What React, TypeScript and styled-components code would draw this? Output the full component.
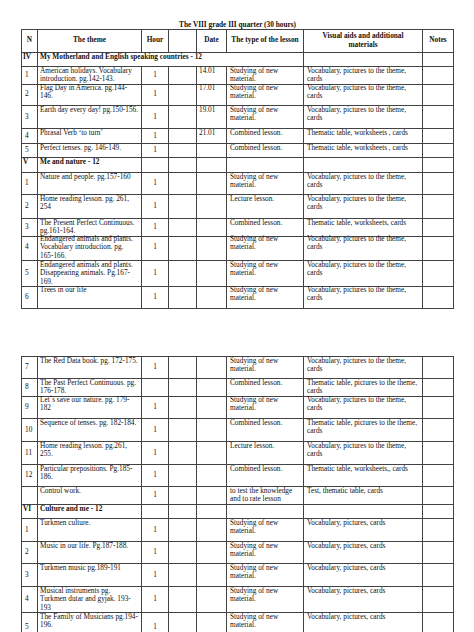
import React from "react";
import styled, { createGlobalStyle } from "styled-components";

const LINE = "#434343";

const GlobalStyle = createGlobalStyle`
  html, body {
    margin: 0;
    padding: 0;
    background: #ffffff;
  }
  body {
    font-family: "Liberation Serif", "Times New Roman", serif;
    color: #111111;
  }
`;

const Page = styled.div`
  width: 474px;
  height: 632px;
  overflow: hidden;
  padding-left: 21px;
  box-sizing: border-box;
`;

const Title = styled.div`
  width: 433px;
  height: 29px;
  display: flex;
  align-items: flex-end;
  justify-content: center;
  font-size: 7.3px;
  line-height: 9px;
  font-weight: bold;
`;

const Sheet = styled.div<{ $gap?: number }>`
  width: 433px;
  box-sizing: border-box;
  border-top: 1px solid ${LINE};
  border-left: 1px solid ${LINE};
  margin-top: ${(p) => p.$gap ?? 0}px;
`;

const Row = styled.div<{ $h: number }>`
  display: grid;
  grid-template-columns: 16px 104px 27px 28px 30px 77px 119px 31px;
  height: ${(p) => p.$h}px;
`;

const Cell = styled.div<{ $span?: number }>`
  box-sizing: border-box;
  border-right: 1px solid ${LINE};
  border-bottom: 1px solid ${LINE};
  grid-column: span ${(p) => p.$span ?? 1};
  font-size: 7.3px;
  line-height: 8.4px;
  white-space: nowrap;
  display: flex;
  flex-direction: column;
  min-width: 0;
`;

const HeadCell = styled(Cell)`
  font-weight: bold;
  align-items: center;
  justify-content: center;
  text-align: center;
  padding-bottom: 1px;
`;

const NumCell = styled(Cell)<{ $bold?: boolean }>`
  justify-content: ${(p) => (p.$bold ? "flex-start" : "center")};
  padding-left: ${(p) => (p.$bold ? 1 : 3)}px;
  font-weight: ${(p) => (p.$bold ? "bold" : "normal")};
`;

const TextCell = styled(Cell)<{ $pad?: number }>`
  justify-content: flex-start;
  padding-left: ${(p) => p.$pad ?? 3}px;
`;

const SectionCell = styled(Cell)`
  justify-content: flex-start;
  padding-left: 2px;
  font-weight: bold;
`;

const HourCell = styled(Cell)`
  align-items: center;
  justify-content: center;
`;

type Item = {
  n: string;
  theme: string[];
  hour?: string;
  date?: string;
  type: string[];
  visual: string[];
  h: number;
};

type Section = { section: string; title: string; h: number; merged?: boolean };

type Line = Item | Section;

const STUDY = ["Studying of new", "material."];
const VOCAB = ["Vocabulary, pictures to the theme,", "cards"];
const COMBINED = ["Combined lesson."];
const VPC = ["Vocabulary, pictures, cards"];

const firstSheet: Line[] = [
  {
    section: "IV",
    title: "My Motherland and English speaking countries  - 12",
    h: 14,
    merged: true,
  },
  {
    n: "1",
    theme: ["American holidays. Vocabulary", "introduction. pg.142-143."],
    hour: "1",
    date: "14.01",
    type: STUDY,
    visual: VOCAB,
    h: 17,
  },
  {
    n: "2",
    theme: ["Flag Day in America. pg.144-", "146."],
    hour: "1",
    date: "17.01",
    type: STUDY,
    visual: VOCAB,
    h: 22,
  },
  {
    n: "3",
    theme: ["Earth day every day! pg.150-156."],
    hour: "1",
    date: "19.01",
    type: STUDY,
    visual: VOCAB,
    h: 23,
  },
  {
    n: "4",
    theme: ["Phrasal Verb \u2018to turn\u2019"],
    hour: "1",
    date: "21.01",
    type: COMBINED,
    visual: ["Thematic table, worksheets , cards"],
    h: 15,
  },
  {
    n: "5",
    theme: ["Perfect tenses. pg. 146-149."],
    hour: "1",
    type: COMBINED,
    visual: ["Thematic table, worksheets , cards"],
    h: 14,
  },
  { section: "V", title: "Me and nature - 12", h: 15 },
  {
    n: "1",
    theme: ["Nature and people. pg.157-160"],
    hour: "1",
    type: STUDY,
    visual: VOCAB,
    h: 22,
  },
  {
    n: "2",
    theme: ["Home reading lesson. pg. 261,", "254"],
    hour: "1",
    type: ["Lecture lesson."],
    visual: VOCAB,
    h: 24,
  },
  {
    n: "3",
    theme: ["The Present Perfect Continuous.", "pg.161-164."],
    hour: "1",
    type: COMBINED,
    visual: ["Thematic table, worksheets, cards"],
    h: 16,
  },
  {
    n: "4",
    theme: ["Endangered animals and plants.", "Vocabulary introduction. pg.", "165-166."],
    hour: "1",
    type: STUDY,
    visual: VOCAB,
    h: 26,
  },
  {
    n: "5",
    theme: ["Endangered animals and plants.", "Disappearing animals. Pg.167-", "169."],
    hour: "1",
    type: STUDY,
    visual: VOCAB,
    h: 25,
  },
  {
    n: "6",
    theme: ["Trees in our life"],
    hour: "1",
    type: STUDY,
    visual: VOCAB,
    h: 23,
  },
];

const secondSheet: Line[] = [
  {
    n: "7",
    theme: ["The Red Data book. pg. 172-175."],
    hour: "1",
    type: STUDY,
    visual: VOCAB,
    h: 22,
  },
  {
    n: "8",
    theme: ["The Past Perfect Continuous. pg.", "176-178."],
    type: COMBINED,
    visual: ["Thematic table, pictures to the theme,", "cards"],
    h: 17,
  },
  {
    n: "9",
    theme: ["Let`s save our nature. pg. 179-", "182"],
    hour: "1",
    type: STUDY,
    visual: VOCAB,
    h: 23,
  },
  {
    n: "10",
    theme: ["Sequence of tenses. pg. 182-184."],
    hour: "1",
    type: COMBINED,
    visual: ["Thematic table, pictures to the theme,", "cards"],
    h: 23,
  },
  {
    n: "11",
    theme: ["Home reading lesson. pg.261,", "255."],
    hour: "1",
    type: ["Lecture lesson."],
    visual: VOCAB,
    h: 23,
  },
  {
    n: "12",
    theme: ["Particular prepositions. Pg.185-", "186."],
    hour: "1",
    type: COMBINED,
    visual: ["Thematic table, worksheets,, cards"],
    h: 22,
  },
  {
    n: "",
    theme: ["Control work."],
    hour: "1",
    type: ["to test the knowledge", "and to rate lesson"],
    visual: ["Test, thematic table, cards"],
    h: 18,
  },
  { section: "VI", title: "Culture and me - 12", h: 14 },
  {
    n: "1",
    theme: ["Turkmen culture."],
    hour: "1",
    type: STUDY,
    visual: VPC,
    h: 23,
  },
  {
    n: "2",
    theme: ["Music in our life. Pg.187-188."],
    hour: "1",
    type: STUDY,
    visual: VPC,
    h: 22,
  },
  {
    n: "3",
    theme: ["Turkmen music pg.189-191"],
    hour: "1",
    type: STUDY,
    visual: VPC,
    h: 23,
  },
  {
    n: "4",
    theme: ["Musical instruments pg.", "Turkmen dutar and gyjak. 193-", "193"],
    hour: "1",
    type: STUDY,
    visual: VPC,
    h: 26,
  },
  {
    n: "5",
    theme: ["The Family of Musicians pg.194-", "196."],
    hour: "1",
    type: STUDY,
    visual: VPC,
    h: 30,
  },
];

const Lines = ({ lines }: { lines: string[] }) => (
  <>
    {lines.map((l, i) => (
      <span key={i}>{l}</span>
    ))}
  </>
);

const HeaderRow = () => (
  <Row $h={23}>
    <HeadCell>N</HeadCell>
    <HeadCell>The theme</HeadCell>
    <HeadCell>Hour</HeadCell>
    <HeadCell />
    <HeadCell>Date</HeadCell>
    <HeadCell>The type of the lesson</HeadCell>
    <HeadCell>
      <span>Visual aids and additional</span>
      <span>materials</span>
    </HeadCell>
    <HeadCell>Notes</HeadCell>
  </Row>
);

const SheetRow = ({ line }: { line: Line }) => {
  if ("section" in line) {
    return (
      <Row $h={line.h}>
        <NumCell $bold>{line.section}</NumCell>
        {line.merged ? (
          <SectionCell $span={5}>{line.title}</SectionCell>
        ) : (
          <>
            <SectionCell>{line.title}</SectionCell>
            <Cell />
            <Cell />
            <Cell />
            <Cell />
          </>
        )}
        <Cell />
        <Cell />
      </Row>
    );
  }
  return (
    <Row $h={line.h}>
      <NumCell>{line.n}</NumCell>
      <TextCell $pad={2}>
        <Lines lines={line.theme} />
      </TextCell>
      <HourCell>{line.hour}</HourCell>
      <Cell />
      <TextCell $pad={2}>{line.date}</TextCell>
      <TextCell>
        <Lines lines={line.type} />
      </TextCell>
      <TextCell>
        <Lines lines={line.visual} />
      </TextCell>
      <Cell />
    </Row>
  );
};

export default function App() {
  return (
    <Page>
      <GlobalStyle />
      <Title>The VIII grade III quarter (30 hours)</Title>
      <Sheet>
        <HeaderRow />
        {firstSheet.map((l, i) => (
          <SheetRow key={i} line={l} />
        ))}
      </Sheet>
      <Sheet $gap={47}>
        {secondSheet.map((l, i) => (
          <SheetRow key={i} line={l} />
        ))}
      </Sheet>
    </Page>
  );
}
